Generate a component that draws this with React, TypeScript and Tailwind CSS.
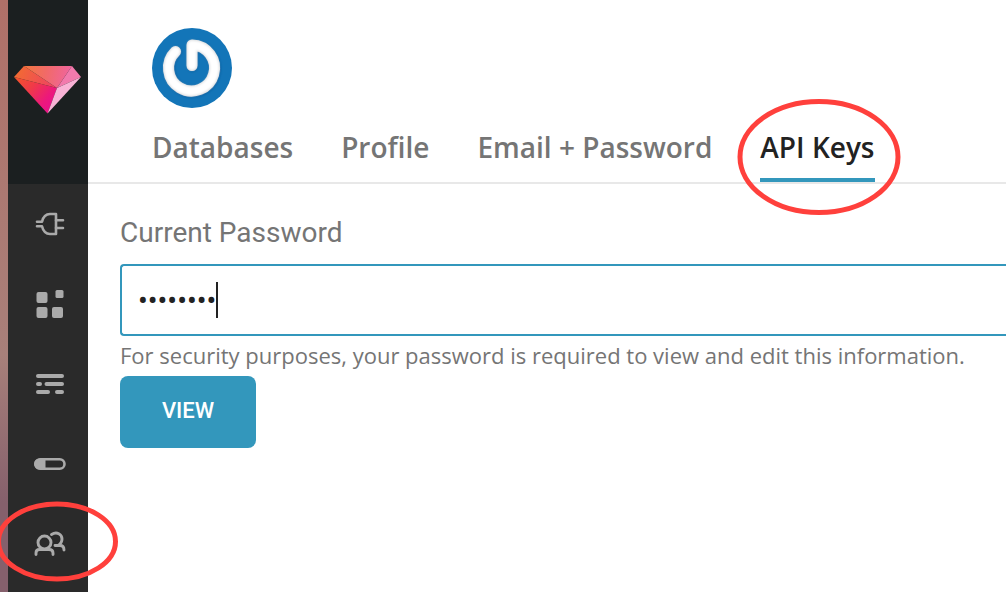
import React from "react";

const tabs = ["Databases", "Profile", "Email + Password", "API Keys"];

function Gem() {
  return (
    <svg width="68" height="48" viewBox="14 66 68 48" aria-hidden="true">
      <defs>
        <linearGradient id="gemLower" gradientUnits="userSpaceOnUse" x1="18" y1="78" x2="50" y2="104">
          <stop offset="0" stopColor="#f4512f" />
          <stop offset="0.4" stopColor="#f03a48" />
          <stop offset="0.85" stopColor="#ec187c" />
          <stop offset="1" stopColor="#ea1485" />
        </linearGradient>
        <linearGradient id="gemLeft" gradientUnits="userSpaceOnUse" x1="16" y1="74" x2="57" y2="88">
          <stop offset="0" stopColor="#f26a33" />
          <stop offset="1" stopColor="#ee3f66" />
        </linearGradient>
        <linearGradient id="gemTop" gradientUnits="userSpaceOnUse" x1="24" y1="70" x2="68" y2="78">
          <stop offset="0" stopColor="#f2763f" />
          <stop offset="0.5" stopColor="#f16a68" />
          <stop offset="1" stopColor="#f0659a" />
        </linearGradient>
      </defs>
      <path d="M14 77L57 88L47.500 113.500Z" fill="url(#gemLower)" />
      <path d="M24 66L57 88L14 77Z" fill="url(#gemLeft)" />
      <path d="M24 66H72L57 88Z" fill="url(#gemTop)" />
      <path d="M72 66L81 77L57 88Z" fill="#f27aad" />
      <path d="M81 77L57 88L47.500 113.500Z" fill="#f9b3d6" />
    </svg>
  );
}

const powerPath = "M23.500 23.500A23 23 0 1 0 40 17V37.500";

function Avatar() {
  return (
    <svg className="block size-20" viewBox="0 0 80 80" role="img" aria-label="Account avatar">
      <defs>
        <filter id="soft" x="-20%" y="-20%" width="140%" height="140%">
          <feGaussianBlur stdDeviation="0.8" />
        </filter>
      </defs>
      <circle cx="40" cy="40" r="40" fill="#1375b8" />
      <g fill="none" strokeLinecap="round" strokeLinejoin="round">
        <path d={powerPath} stroke="#0d5c9c" strokeWidth="11.500" filter="url(#soft)" transform="translate(.5 .5)" />
        <path d={powerPath} stroke="#dcdee0" strokeWidth="11" />
        <path d={powerPath} stroke="#fff" strokeWidth="9" filter="url(#soft)" />
      </g>
    </svg>
  );
}

const icons = [
  {
    label: "Connections",
    art: (
      <g fill="none" stroke="#aaa" strokeWidth="2.600" strokeLinecap="round" strokeLinejoin="round">
        <path d="M3 13.700H8C9 9.500 11.500 6 16 6H22V26H16C11.500 26 9 22.500 8 18.300H3" />
        <path d="M22 12.200H29M22 20H29" />
      </g>
    ),
  },
  {
    label: "Apps",
    art: (
      <g fill="#aaa">
        <rect x="2.500" y="4" width="11" height="11" rx="2" />
        <rect x="21.500" y="2" width="8" height="8" rx="1.500" />
        <rect x="2.500" y="19" width="11" height="11" rx="2" />
        <rect x="18" y="19" width="11" height="11" rx="2" />
      </g>
    ),
  },
  {
    label: "Logs",
    art: (
      <g stroke="#aaa" strokeWidth="4" strokeLinecap="round">
        <path d="M4 8H28M4 16H6M12.500 16H28M4 24H14M23 24H28" />
      </g>
    ),
  },
  {
    label: "Usage",
    art: (
      <g>
        <rect x="1.500" y="11.200" width="29" height="9.600" rx="4.800" fill="none" stroke="#aaa" strokeWidth="2.600" />
        <path d="M5.500 10.500H11.500V21.500H5.500A5.500 5.500 0 0 1 5.500 10.500Z" fill="#aaa" />
      </g>
    ),
  },
  {
    label: "Account",
    art: (
      <g fill="none" stroke="#aaa" strokeWidth="2.900" strokeLinecap="round" strokeLinejoin="round">
        <circle cx="10.500" cy="14.500" r="6.500" />
        <path d="M2 26.500V25C2 22.600 3.200 21.500 5.500 21.500H15C17.500 21.500 19 22.700 19 25V26.500" />
        <path d="M17.500 6.500C23 3 28 6.500 28 11C28 14 26.300 16.200 24 17.500H26C28.500 17.500 30 19 30 22M24 17.500H21" />
      </g>
    ),
  },
];

export default function App() {
  return (
    <div className="relative flex min-h-screen overflow-hidden bg-white font-['Open_Sans',sans-serif] text-[#757575]">
      <div className="w-2 shrink-0 bg-linear-to-b from-[#b07068] via-[#a8807a] via-60% to-[#85606c] to-85%" />
      <aside className="flex w-20 shrink-0 flex-col bg-[#2a2a2a]">
        <a href="#home" aria-label="Home" className="flex h-46 items-center justify-center bg-[#1b1f20] pb-1">
          <Gem />
        </a>
        <nav aria-label="Main" className="flex flex-col">
          {icons.map((icon) => (
            <a key={icon.label} href="#section" aria-label={icon.label} className="flex h-20 items-center justify-center pl-1">
              <svg width="32" height="32" viewBox="0 0 32 32" aria-hidden="true">{icon.art}</svg>
            </a>
          ))}
        </nav>
      </aside>
      <main className="min-w-0 flex-1">
        <header className="border-b-2 border-[#e8e8e8] pt-7 pl-16">
          <Avatar />
          <nav aria-label="Account" className="flex gap-12 pt-2 text-[28px] leading-10 font-semibold whitespace-nowrap">
            {tabs.map((tab) => (
              <a
                key={tab}
                href="#tab"
                aria-current={tab === "API Keys" ? "page" : undefined}
                className="border-b-4 border-transparent py-[11px] aria-[current=page]:border-[#3397bc] aria-[current=page]:text-[#222]"
              >
                {tab}
              </a>
            ))}
          </nav>
        </header>
        <form className="flex flex-col items-start pt-7 pl-8" onSubmit={(event) => event.preventDefault()}>
          <label htmlFor="password" className="font-[Roboto,sans-serif] text-[28px] leading-[42px]">Current Password</label>
          <div className="relative mt-2.5 w-full">
            <input
              id="password"
              type="password"
              defaultValue="password"
              aria-describedby="password-help"
              className="block h-18 w-full rounded-l border-2 border-r-0 border-[#3397bc] px-4 pt-0.5 font-[Roboto,sans-serif] text-[29px] text-[#222] outline-none"
            />
            <span className="absolute top-4.5 left-24 h-9 w-0.5 bg-[#222]" />
          </div>
          <p id="password-help" className="pb-0.5 text-[22px] leading-[38px] whitespace-nowrap">
            For security purposes, your password is required to view and edit this information.
          </p>
          <button className="h-18 w-34 rounded-lg bg-[#3397bc] pb-1 font-[Roboto,sans-serif] text-[22px] font-medium text-white">VIEW</button>
        </form>
      </main>
      <svg className="pointer-events-none absolute top-0 left-0" width="1006" height="592" viewBox="0 0 1006 592" fill="none" stroke="#ff403c" strokeWidth="5" aria-hidden="true">
        <ellipse cx="819" cy="157" rx="79" ry="55.500" />
        <ellipse cx="57" cy="541.500" rx="58.500" ry="37.500" />
      </svg>
    </div>
  );
}
